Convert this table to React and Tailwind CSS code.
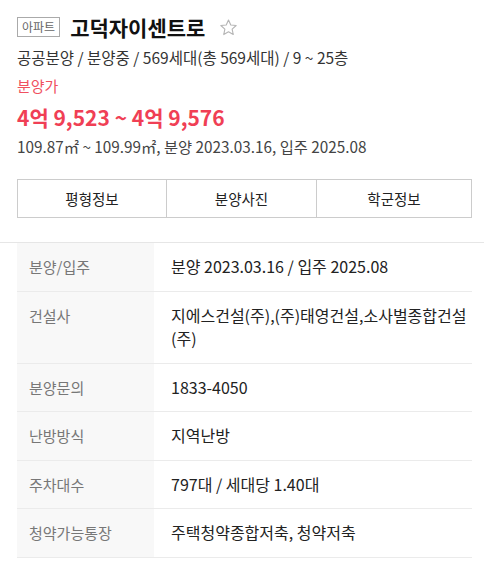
import React from 'react';

const rows = [
    { label: '분양/입주', value: '분양 2023.03.16 / 입주 2025.08' },
    { label: '건설사', value: '지에스건설(주),(주)태영건설,소사벌종합건설(주)' },
    { label: '분양문의', value: '1833-4050' },
    { label: '난방방식', value: '지역난방' },
    { label: '주차대수', value: '797대 / 세대당 1.40대' },
    { label: '청약가능통장', value: '주택청약종합저축, 청약저축' },
];

const StarOutline = () => (
    <svg width="19" height="19" viewBox="0 0 24 24" fill="none" stroke="#b5b5b5" strokeWidth="1.4" strokeLinejoin="round">
        <path d="M12 2.5l2.9 6.3 6.8.7-5.1 4.6 1.4 6.8L12 17.4l-6 3.5 1.4-6.8-5.1-4.6 6.8-.7z" />
    </svg>
);

export default function App() {
    return (
        <div className="w-[484px] min-h-[566px] bg-white text-[#222] font-['Noto_Sans_CJK_KR','Noto_Sans',sans-serif]">
            {/* Header */}
            <div className="px-[17px] pt-[14px]">
                <div className="flex items-center h-[26px]">
                    <span className="border border-[#aaa] text-[#666] text-[12px] leading-[18px] px-[4px] h-[20px]">아파트</span>
                    <h1 className="ml-[10px] text-[21px] font-bold leading-[26px] text-[#111]">고덕자이센트로</h1>
                    <span className="ml-[14px] flex items-center"><StarOutline /></span>
                </div>
                <p className="mt-[6px] text-[15.5px] leading-[22px] text-[#333]">공공분양 / 분양중 / 569세대(총 569세대) / 9 ~ 25층</p>
                <p className="mt-[8px] text-[15px] leading-[20px] text-[#f0505f]">분양가</p>
                <p className="mt-[6px] text-[21px] leading-[30px] font-bold text-[#f03f55]">4억 9,523 ~ 4억 9,576</p>
                <p className="mt-[3px] text-[15.3px] leading-[22px] text-[#444]">109.87㎡ ~ 109.99㎡, 분양 2023.03.16, 입주 2025.08</p>
            </div>

            {/* Tabs */}
            <div className="ml-[17px] w-[455px] mt-[22px] grid grid-cols-[148px_150px_1fr] border border-[#ccc] h-[39px]">
                {['평형정보', '분양사진', '학군정보'].map((t, i) => (
                    <button key={t} className={`flex items-center justify-center text-[14.5px] text-[#222] ${i > 0 ? 'border-l border-[#ccc]' : ''}`}>
                        {t}
                    </button>
                ))}
            </div>

            {/* Info table */}
            <div className="mt-[24px] border-t border-[#e6e6e6]">
                <div className="ml-[17px] w-[455px]">
                    {rows.map((r) => (
                        <div key={r.label} className="flex border-b border-[#ebebeb]">
                            <div className="w-[137px] shrink-0 bg-[#f8f8f8] pl-[12px] py-3 text-[15px] leading-[23.5px] text-[#777]">{r.label}</div>
                            <div className="flex-1 pl-[17px] py-3 text-[16px] leading-[23.5px] text-[#222]">{r.value}</div>
                        </div>
                    ))}
                </div>
            </div>
        </div>
    );
}
